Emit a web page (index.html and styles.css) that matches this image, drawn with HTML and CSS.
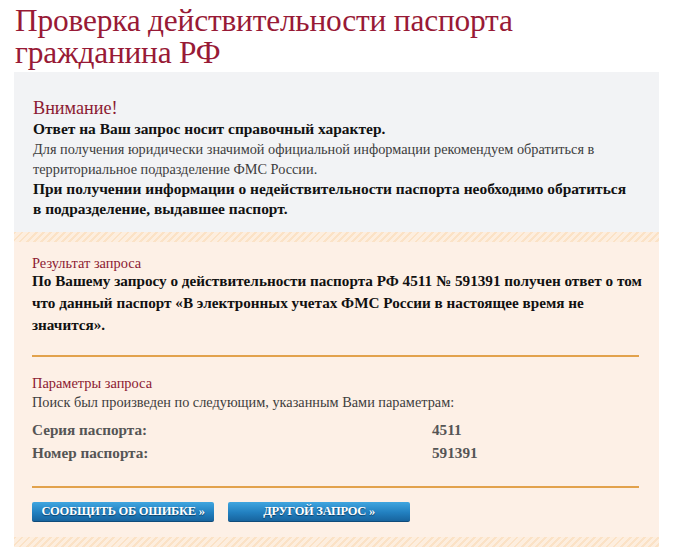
FILE: index.html
```html
<!DOCTYPE html>
<html lang="ru">
<head>
<meta charset="utf-8">
<title>Проверка действительности паспорта гражданина РФ</title>
<link rel="stylesheet" href="styles.css">
</head>
<body>
<h1 class="title">Проверка действительности паспорта<br>гражданина РФ</h1>
<div class="notice">
  <div class="section-title big">Внимание!</div>
  <p class="strong">Ответ на Ваш запрос носит справочный характер.</p>
  <p class="muted">Для получения юридически значимой официальной информации рекомендуем обратиться в территориальное подразделение ФМС России.</p>
  <p class="strong">При получении информации о недействительности паспорта необходимо обратиться в подразделение, выдавшее паспорт.</p>
</div>
<div class="result">
  <div class="section-title">Результат запроса</div>
  <p class="strong result-text">По Вашему запросу о действительности паспорта РФ 4511 № 591391 получен ответ о том что данный паспорт «В электронных учетах ФМС России в настоящее время не значится».</p>
  <hr class="sep">
  <div class="section-title">Параметры запроса</div>
  <p class="muted">Поиск был произведен по следующим, указанным Вами параметрам:</p>
  <div class="params">
    <div class="label">Серия паспорта:</div><div class="value">4511</div>
    <div class="label">Номер паспорта:</div><div class="value">591391</div>
  </div>
  <hr class="sep sep2">
  <div class="buttons">
    <a class="btn" href="#">Сообщить об ошибке »</a>
    <a class="btn" href="#">Другой запрос »</a>
  </div>
</div>
</body>
</html>
```
FILE: styles.css
```css
body {
  margin: 0;
  padding: 5px 14px 0 14px;
  font-family: "Liberation Serif", "Times New Roman", serif;
  background: #fff;
  width: 645px;
}
.title {
  margin: 0 0 0 1px;
  font-weight: normal;
  font-size: 31.4px;
  line-height: 32px;
  color: #981a36;
  letter-spacing: -0.2px;
}
.notice {
  margin-top: 3px;
  background: #f2f3f5;
  padding: 26px 30px 13px 19px;
}
.section-title {
  color: #8c1a32;
  font-size: 14.4px;
  line-height: 18px;
}
.section-title.big {
  font-size: 18.2px;
  line-height: 21px;
}
p { margin: 0; }
.strong {
  font-weight: bold;
  font-size: 15.2px;
  line-height: 20px;
  color: #111;
}
.notice .strong {
  font-size: 15.45px;
}
.muted {
  font-size: 14.3px;
  line-height: 20px;
  color: #3d3d3d;
}
.result {
  background:
    repeating-linear-gradient(135deg, #fbe2c6 0 2px, #fdeedf 2px 5px) top / 100% 10px no-repeat,
    repeating-linear-gradient(135deg, #fbe2c6 0 2px, #fdeedf 2px 5px) bottom / 100% 10px no-repeat,
    #fdf0e6;
  padding: 22px 20px 25px 18px;
}
.result-text {
  line-height: 22px;
  margin-top: -2px;
  margin-right: -8px;
}
.sep {
  border: 0;
  height: 2px;
  background: #e2a24c;
  margin: 19px 0 17px 0;
}
.sep2 { margin: 23px 0 14px 0; }
.params {
  display: grid;
  grid-template-columns: 400px 1fr;
  row-gap: 3px;
  margin-top: 8px;
  font-weight: bold;
  font-size: 15.2px;
  line-height: 20px;
  color: #555;
}
.buttons {
  display: flex;
  gap: 14px;
}
.btn {
  display: block;
  width: 182px;
  height: 20px;
  box-sizing: border-box;
  border-radius: 2px;
  background: linear-gradient(#40a6e0, #2280c0 55%, #17649e);
  border-bottom: 1px solid #0f4b7a;
  color: #fff;
  text-decoration: none;
  text-transform: uppercase;
  font-weight: bold;
  font-size: 12.5px;
  line-height: 19px;
  text-align: center;
  text-shadow: 0 1px 1px #0b3f66;
  letter-spacing: -0.3px;
}
```
